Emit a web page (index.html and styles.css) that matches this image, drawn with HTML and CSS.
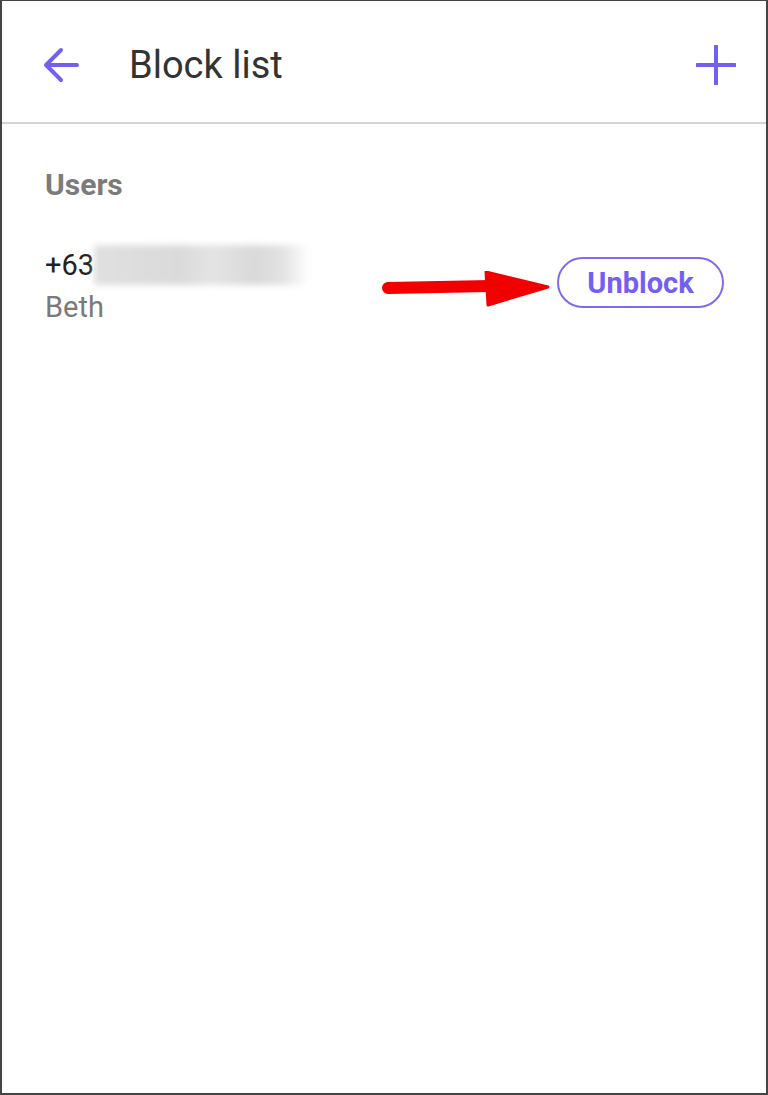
FILE: index.html
```html
<!DOCTYPE html>
<html lang="en">
<head>
<meta charset="utf-8">
<title>Block list</title>
<link rel="stylesheet" href="styles.css">
</head>
<body>
<div class="frame">
  <header class="topbar">
    <svg class="icon-back" width="36" height="36" viewBox="0 0 36 36" aria-hidden="true">
      <path d="M34 18H3M18 3L3 18L18 33" fill="none" stroke="#7360f2" stroke-width="4" stroke-linecap="round" stroke-linejoin="round"/>
    </svg>
    <h1 class="title">Block list</h1>
    <svg class="icon-plus" width="40" height="40" viewBox="0 0 40 40" aria-hidden="true">
      <path d="M20 1V39M1 20H39" fill="none" stroke="#7360f2" stroke-width="4" stroke-linecap="round"/>
    </svg>
  </header>
  <main class="content">
    <h2 class="section">Users</h2>
    <div class="row">
      <div class="who">
        <div class="number"><span>+63</span><span class="blur"></span></div>
        <div class="name">Beth</div>
      </div>
      <button class="unblock">Unblock</button>
      <svg class="annot" width="172" height="40" viewBox="0 0 172 40" aria-hidden="true">
        <path d="M6 17 L108 15" stroke="#f20000" stroke-width="12" stroke-linecap="round" fill="none"/>
        <path d="M104 1 L166 16 L106 34 Z" fill="#f20000" stroke="#f20000" stroke-width="3" stroke-linejoin="round"/>
      </svg>
    </div>
  </main>
</div>
</body>
</html>
```
FILE: styles.css
```css
* { box-sizing: border-box; }
html, body { margin: 0; padding: 0; background: #fff; }
body { font-family: Roboto, "Noto Sans", Arial, sans-serif; }
.frame {
  width: 768px;
  height: 1095px;
  border: 2px solid #444;
  border-top-width: 1px;
  background: #fff;
  position: relative;
}
.topbar {
  height: 123px;
  border-bottom: 2px solid #d4d4d4;
  display: flex;
  align-items: center;
  padding: 7px 30px 0 41px;
}
.icon-back { flex: none; }
.title {
  margin: 0 0 0 50px;
  font-size: 38px;
  font-weight: 400;
  color: #333;
  flex: 1;
  line-height: 1;
}
.icon-plus { flex: none; }
.content { padding: 46px 42px 0 43px; }
.section {
  margin: 0;
  font-size: 30px;
  font-weight: 700;
  color: #7b7b7b;
  line-height: 30px;
}
.row {
  position: relative;
  display: flex;
  align-items: flex-start;
  justify-content: space-between;
  margin-top: 45px;
}
.number {
  display: flex;
  align-items: center;
  font-size: 29px;
  color: #222;
  line-height: 40px;
}
.blur {
  display: inline-block;
  width: 215px;
  height: 40px;
  background: linear-gradient(90deg, #e0e0e0 0%, #dadada 40%, #e4e4e4 55%, #d9d9d9 75%, #e3e3e3 88%, rgba(235,235,235,0) 100%);
  filter: blur(3px);
}
.name {
  font-size: 29px;
  color: #7a7a7a;
  line-height: 30px;
  margin-top: 7px;
}
.unblock {
  font-family: Roboto, "Noto Sans", Arial, sans-serif;
  font-size: 29px;
  font-weight: 700;
  color: #7360f2;
  background: #fff;
  border: 2px solid #7e6cf0;
  border-radius: 26px;
  width: 167px;
  height: 51px;
  padding: 0;
  margin-top: 12px;
}
.annot { position: absolute; left: 337px; top: 26px; }
```
